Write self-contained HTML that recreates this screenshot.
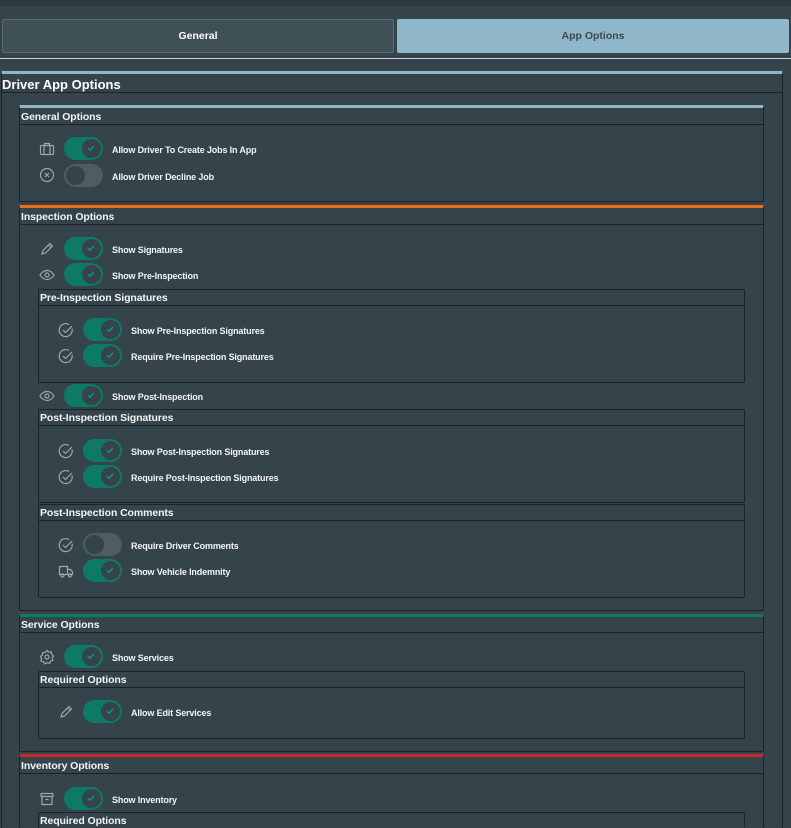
<!DOCTYPE html>
<html style="width:791px;height:828px;overflow:hidden"><head><meta charset="utf-8"><style>
*{box-sizing:border-box;margin:0;padding:0}
html,body{width:791px;height:828px;overflow:hidden}
body{background:#35434a;font-family:"Liberation Sans",sans-serif;position:relative;color:#fff}
.a{position:absolute}
.tab{position:absolute;top:19px;height:34px;border-radius:2px;font-size:10.5px;font-weight:bold;display:flex;align-items:center;justify-content:center}
.panel{position:absolute;border:1px solid #1b2327;border-radius:2px}
.title{position:absolute;left:1px;font-size:10.5px;font-weight:bold;color:#f2f4f5;letter-spacing:-0.1px}
.hl{position:absolute;height:1px;background:#1b2327}
.tg{position:absolute;width:39px;height:23px;border-radius:12px;background:#0d7a65}
.tg::after{content:"";position:absolute;right:1px;top:1px;width:21px;height:21px;border-radius:50%;background:#35434a;border:1px solid #0d7a65;box-sizing:border-box}
.tg.off{background:#4c5d64}
.tg.off::after{left:1px;right:auto;border-color:#4c5d64}
.tg .ck{position:absolute;right:7px;top:6px;z-index:2}
.lb{position:absolute;font-size:9px;font-weight:bold;color:#f2f4f5;letter-spacing:-0.15px;margin-top:1px}
.ic{position:absolute;width:16px;height:16px}
</style></head><body>
<div class="a" style="left:0;top:0;width:791px;height:6px;background:#2e3a40"></div>
<div class="tab" style="left:2px;width:392px;background:#3f5057;border:1px solid #5a6a71;color:#fff">General</div>
<div class="tab" style="left:397px;width:392px;background:#8fb6c9;color:#3a4a52">App Options</div>
<div class="a" style="left:0;top:58px;width:791px;height:1px;background:#c8d1d5"></div>

<div class="panel" style="left:1px;top:71px;width:782px;height:757px;border-top:3px solid #8fb6c9;border-bottom:none"></div>
<div class="a" style="left:2px;top:77px;font-size:13px;font-weight:bold">Driver App Options</div>
<div class="hl" style="left:2px;top:92px;width:780px"></div>

<div class="panel" style="left:19px;top:105px;width:745px;height:97px;border-top:3px solid #8fb6c9"></div>
<div class="title" style="left:21px;top:111px">General Options</div>
<div class="hl" style="left:20px;top:124px;width:743px"></div>

<div class="panel" style="left:19px;top:205px;width:745px;height:406px;border-top:3px solid #f26b1d"></div>
<div class="title" style="left:21px;top:211px">Inspection Options</div>
<div class="hl" style="left:20px;top:224px;width:743px"></div>

<div class="panel" style="left:38px;top:289px;width:707px;height:94px"></div>
<div class="title" style="left:40px;top:292px">Pre-Inspection Signatures</div>
<div class="hl" style="left:39px;top:305px;width:705px"></div>

<div class="panel" style="left:38px;top:409px;width:707px;height:94px"></div>
<div class="title" style="left:40px;top:412px">Post-Inspection Signatures</div>
<div class="hl" style="left:39px;top:425px;width:705px"></div>

<div class="panel" style="left:38px;top:504px;width:707px;height:94px"></div>
<div class="title" style="left:40px;top:507px">Post-Inspection Comments</div>
<div class="hl" style="left:39px;top:520px;width:705px"></div>

<div class="panel" style="left:19px;top:614px;width:745px;height:138px;border-top:3px solid #0d7a65"></div>
<div class="title" style="left:21px;top:619px">Service Options</div>
<div class="hl" style="left:20px;top:632px;width:743px"></div>
<div class="panel" style="left:38px;top:671px;width:707px;height:68px"></div>
<div class="title" style="left:40px;top:674px">Required Options</div>
<div class="hl" style="left:39px;top:687px;width:705px"></div>

<div class="panel" style="left:19px;top:754px;width:745px;height:74px;border-top:3px solid #c8282a;border-bottom:none"></div>
<div class="title" style="left:21px;top:760px">Inventory Options</div>
<div class="hl" style="left:20px;top:773px;width:743px"></div>
<div class="panel" style="left:38px;top:812px;width:707px;height:16px;border-bottom:none"></div>
<div class="title" style="left:40px;top:815px">Required Options</div>

<svg width="0" height="0" style="position:absolute">
<defs>
<symbol id="chk" viewBox="0 0 10 10"><path d="M2 5.2l2 2 4-4.2" fill="none" stroke="#0d9a7e" stroke-width="1.4"/></symbol>
</defs></svg>

<svg class="ic" style="left:39px;top:141px" viewBox="0 0 16 16" fill="none" stroke="#9aa6b0" stroke-width="1.2"><rect x="1.5" y="4.5" width="13" height="9" rx="1"/><path d="M5.5 4.5V2.5h5v2M5 4.5v9M11 4.5v9"/></svg>
<div class="tg" style="left:64px;top:137px"><svg class="ck" width="10" height="10"><use href="#chk"/></svg></div>
<div class="lb" style="left:112px;top:144px">Allow Driver To Create Jobs In App</div>

<svg class="ic" style="left:39px;top:167px" viewBox="0 0 16 16" fill="none" stroke="#9aa6b0" stroke-width="1.2"><circle cx="8" cy="8" r="6.5"/><path d="M6 6l4 4M10 6l-4 4"/></svg>
<div class="tg off" style="left:64px;top:164px"></div>
<div class="lb" style="left:112px;top:171px">Allow Driver Decline Job</div>

<svg class="ic" style="left:39px;top:241px" viewBox="0 0 16 16" fill="none" stroke="#9aa6b0" stroke-width="1.2"><path d="M3 13l1-3.5 7-7 2.5 2.5-7 7z M9.5 4l2.5 2.5"/></svg>
<div class="tg" style="left:64px;top:237px"><svg class="ck" width="10" height="10"><use href="#chk"/></svg></div>
<div class="lb" style="left:112px;top:244px">Show Signatures</div>

<svg class="ic" style="left:39px;top:267px" viewBox="0 0 16 16" fill="none" stroke="#9aa6b0" stroke-width="1.2"><path d="M1 8s2.5-4.5 7-4.5S15 8 15 8s-2.5 4.5-7 4.5S1 8 1 8z"/><circle cx="8" cy="8" r="2"/></svg>
<div class="tg" style="left:64px;top:263px"><svg class="ck" width="10" height="10"><use href="#chk"/></svg></div>
<div class="lb" style="left:112px;top:270px">Show Pre-Inspection</div>

<svg class="ic" style="left:58px;top:322px" viewBox="0 0 16 16" fill="none" stroke="#9aa6b0" stroke-width="1.2"><path d="M14 6.5A6.5 6.5 0 1 1 11 2.5"/><path d="M5 8l2.5 2.5L14 4"/></svg>
<div class="tg" style="left:83px;top:318px"><svg class="ck" width="10" height="10"><use href="#chk"/></svg></div>
<div class="lb" style="left:131px;top:325px">Show Pre-Inspection Signatures</div>

<svg class="ic" style="left:58px;top:348px" viewBox="0 0 16 16" fill="none" stroke="#9aa6b0" stroke-width="1.2"><path d="M14 6.5A6.5 6.5 0 1 1 11 2.5"/><path d="M5 8l2.5 2.5L14 4"/></svg>
<div class="tg" style="left:83px;top:344px"><svg class="ck" width="10" height="10"><use href="#chk"/></svg></div>
<div class="lb" style="left:131px;top:351px">Require Pre-Inspection Signatures</div>

<svg class="ic" style="left:39px;top:388px" viewBox="0 0 16 16" fill="none" stroke="#9aa6b0" stroke-width="1.2"><path d="M1 8s2.5-4.5 7-4.5S15 8 15 8s-2.5 4.5-7 4.5S1 8 1 8z"/><circle cx="8" cy="8" r="2"/></svg>
<div class="tg" style="left:64px;top:384px"><svg class="ck" width="10" height="10"><use href="#chk"/></svg></div>
<div class="lb" style="left:112px;top:391px">Show Post-Inspection</div>

<svg class="ic" style="left:58px;top:443px" viewBox="0 0 16 16" fill="none" stroke="#9aa6b0" stroke-width="1.2"><path d="M14 6.5A6.5 6.5 0 1 1 11 2.5"/><path d="M5 8l2.5 2.5L14 4"/></svg>
<div class="tg" style="left:83px;top:439px"><svg class="ck" width="10" height="10"><use href="#chk"/></svg></div>
<div class="lb" style="left:131px;top:446px">Show Post-Inspection Signatures</div>

<svg class="ic" style="left:58px;top:469px" viewBox="0 0 16 16" fill="none" stroke="#9aa6b0" stroke-width="1.2"><path d="M14 6.5A6.5 6.5 0 1 1 11 2.5"/><path d="M5 8l2.5 2.5L14 4"/></svg>
<div class="tg" style="left:83px;top:465px"><svg class="ck" width="10" height="10"><use href="#chk"/></svg></div>
<div class="lb" style="left:131px;top:472px">Require Post-Inspection Signatures</div>

<svg class="ic" style="left:58px;top:537px" viewBox="0 0 16 16" fill="none" stroke="#9aa6b0" stroke-width="1.2"><path d="M14 6.5A6.5 6.5 0 1 1 11 2.5"/><path d="M5 8l2.5 2.5L14 4"/></svg>
<div class="tg off" style="left:83px;top:533px"></div>
<div class="lb" style="left:131px;top:540px">Require Driver Comments</div>

<svg class="ic" style="left:58px;top:563px" viewBox="0 0 16 16" fill="none" stroke="#9aa6b0" stroke-width="1.2"><path d="M1.5 3.5h8v8h-8zM9.5 6.5h3l2 2.5v2.5h-5"/><circle cx="4.5" cy="12.5" r="1.5"/><circle cx="12" cy="12.5" r="1.5"/></svg>
<div class="tg" style="left:83px;top:559px"><svg class="ck" width="10" height="10"><use href="#chk"/></svg></div>
<div class="lb" style="left:131px;top:566px">Show Vehicle Indemnity</div>

<svg class="ic" style="left:39px;top:649px" viewBox="0 0 16 16" fill="none" stroke="#9aa6b0" stroke-width="1.2"><path d="M8 1.5l1.8 1.6 2.4-.2.4 2.4 1.9 1.5-1.2 2.1.6 2.4-2.3.8-1 2.2-2.6-.6-2.3 1.1-1.3-2.1-2.4-.6.5-2.4L1.4 7.4l2-1.4.2-2.4 2.4.1z"/><circle cx="8" cy="8" r="2"/></svg>
<div class="tg" style="left:64px;top:645px"><svg class="ck" width="10" height="10"><use href="#chk"/></svg></div>
<div class="lb" style="left:112px;top:652px">Show Services</div>

<svg class="ic" style="left:58px;top:704px" viewBox="0 0 16 16" fill="none" stroke="#9aa6b0" stroke-width="1.2"><path d="M3 13l1-3.5 7-7 2.5 2.5-7 7z M9.5 4l2.5 2.5"/></svg>
<div class="tg" style="left:83px;top:700px"><svg class="ck" width="10" height="10"><use href="#chk"/></svg></div>
<div class="lb" style="left:131px;top:707px">Allow Edit Services</div>

<svg class="ic" style="left:39px;top:791px" viewBox="0 0 16 16" fill="none" stroke="#9aa6b0" stroke-width="1.2"><rect x="2" y="2.5" width="12" height="3" rx=".5"/><path d="M3 5.5v8h10v-8M6.5 8.5h3"/></svg>
<div class="tg" style="left:64px;top:787px"><svg class="ck" width="10" height="10"><use href="#chk"/></svg></div>
<div class="lb" style="left:112px;top:794px">Show Inventory</div>
</body></html>
